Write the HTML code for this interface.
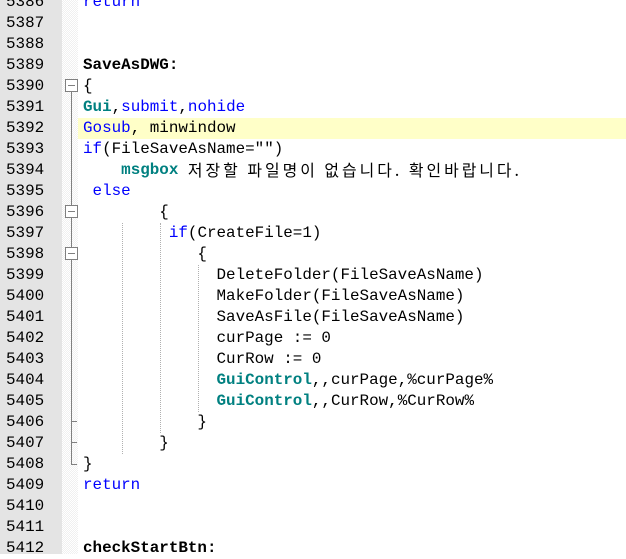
<!DOCTYPE html>
<html><head><meta charset="utf-8"><style>
*{margin:0;padding:0}
body{width:626px;height:554px;overflow:hidden;background:#fff;position:relative;font-family:"Liberation Mono","Noto Sans CJK KR",monospace;font-size:15.9px}
.gut{position:absolute;left:0;top:0;width:62px;height:554px;background:#e4e4e4}
.fold{position:absolute;left:62px;top:0;width:16px;height:554px;background:repeating-conic-gradient(#f0f0f0 0 25%,#fff 0 50%) 0 0/2px 2px}
.row{position:absolute;left:0;height:21px;line-height:21px;width:626px;white-space:pre}
.n{position:absolute;left:6px;color:#000}
.c{position:absolute;left:83px;color:#000}
.hl{background:#ffffc8}
.k{color:#0000ff}
.t{color:#008080;font-weight:bold}
.b{font-weight:bold}
.box{position:absolute;left:65px;width:11px;height:11px;border:1px solid #808080;background:#fff}
.box:after{content:"";position:absolute;left:2px;top:5px;width:7px;height:1px;background:#808080}
.vl{position:absolute;left:71px;width:1px;background:#808080}
.tk{position:absolute;left:71px;width:6px;height:1px;background:#808080}
.ig{position:absolute;width:0;border-left:1px dotted #b0b0b0}
.kr{font-family:"Noto Sans CJK KR","Liberation Mono",sans-serif;letter-spacing:3px;line-height:21px;display:inline-block;vertical-align:top;margin-top:-1px}
</style></head><body>
<div class="gut"></div><div class="fold"></div>
<div class="row hl" style="top:118px;left:78px;width:548px"></div>
<div class="row" style="top:-8px"><span class="n">5386</span><span class="c k">return</span></div>
<div class="row" style="top:13px"><span class="n">5387</span></div>
<div class="row" style="top:34px"><span class="n">5388</span></div>
<div class="row" style="top:55px"><span class="n">5389</span><span class="c b">SaveAsDWG:</span></div>
<div class="row" style="top:76px"><span class="n">5390</span><span class="c">{</span></div>
<div class="row" style="top:97px"><span class="n">5391</span><span class="c"><span class="t">Gui</span>,<span class="k">submit</span>,<span class="k">nohide</span></span></div>
<div class="row" style="top:118px"><span class="n">5392</span><span class="c"><span class="k">Gosub</span>, minwindow</span></div>
<div class="row" style="top:139px"><span class="n">5393</span><span class="c"><span class="k">if</span>(FileSaveAsName="")</span></div>
<div class="row" style="top:160px"><span class="n">5394</span><span class="c">    <span class="t">msgbox</span> <span class="kr">저장할 파일명이 없습니다. 확인바랍니다.</span></span></div>
<div class="row" style="top:181px"><span class="n">5395</span><span class="c"> <span class="k">else</span></span></div>
<div class="row" style="top:202px"><span class="n">5396</span><span class="c">        {</span></div>
<div class="row" style="top:223px"><span class="n">5397</span><span class="c">         <span class="k">if</span>(CreateFile=1)</span></div>
<div class="row" style="top:244px"><span class="n">5398</span><span class="c">            {</span></div>
<div class="row" style="top:265px"><span class="n">5399</span><span class="c">              DeleteFolder(FileSaveAsName)</span></div>
<div class="row" style="top:286px"><span class="n">5400</span><span class="c">              MakeFolder(FileSaveAsName)</span></div>
<div class="row" style="top:307px"><span class="n">5401</span><span class="c">              SaveAsFile(FileSaveAsName)</span></div>
<div class="row" style="top:328px"><span class="n">5402</span><span class="c">              curPage := 0</span></div>
<div class="row" style="top:349px"><span class="n">5403</span><span class="c">              CurRow := 0</span></div>
<div class="row" style="top:370px"><span class="n">5404</span><span class="c">              <span class="t">GuiControl</span>,,curPage,%curPage%</span></div>
<div class="row" style="top:391px"><span class="n">5405</span><span class="c">              <span class="t">GuiControl</span>,,CurRow,%CurRow%</span></div>
<div class="row" style="top:412px"><span class="n">5406</span><span class="c">            }</span></div>
<div class="row" style="top:433px"><span class="n">5407</span><span class="c">        }</span></div>
<div class="row" style="top:454px"><span class="n">5408</span><span class="c">}</span></div>
<div class="row" style="top:475px"><span class="n">5409</span><span class="c k">return</span></div>
<div class="row" style="top:496px"><span class="n">5410</span></div>
<div class="row" style="top:517px"><span class="n">5411</span></div>
<div class="row" style="top:538px"><span class="n">5412</span><span class="c b">checkStartBtn:</span></div>
<div class="vl" style="top:91px;height:374px"></div>
<div class="box" style="top:79px"></div>
<div class="box" style="top:205px"></div>
<div class="box" style="top:247px"></div>
<div class="tk" style="top:421px"></div>
<div class="tk" style="top:442px"></div>
<div class="tk" style="top:464px"></div>
<div class="ig" style="left:122px;top:223px;height:231px"></div>
<div class="ig" style="left:160px;top:223px;height:210px"></div>
<div class="ig" style="left:198px;top:265px;height:147px"></div>
</body></html>
